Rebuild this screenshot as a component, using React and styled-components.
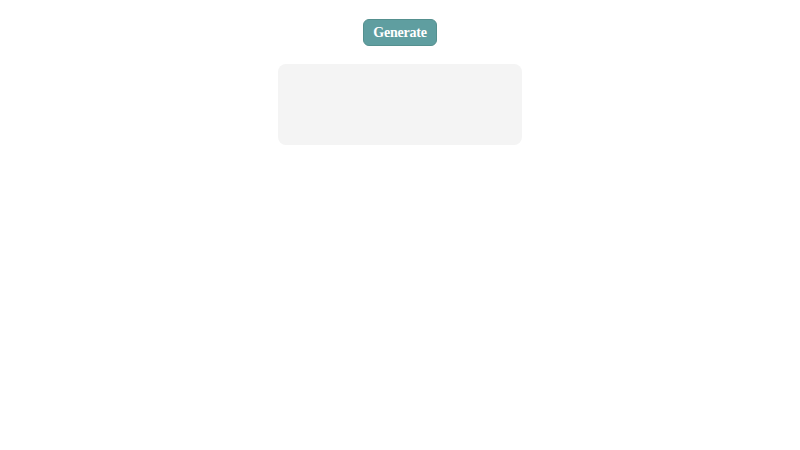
import React from "react";
import styled, { createGlobalStyle } from "styled-components";

const Global = createGlobalStyle`
  body {
    margin: 0;
    background: #fff;
    font-family: "Liberation Serif", serif;
  }
`;

const Wrap = styled.div`
  display: flex;
  flex-direction: column;
  align-items: center;
  padding-top: 19px;
`;

const Btn = styled.button`
  height: 27px;
  padding: 0 9px;
  border: 1px solid #55908f;
  border-radius: 6px;
  background-color: #5f9ea0;
  color: white;
  font-family: "Liberation Serif", serif;
  font-weight: bold;
  font-size: 14px;
  letter-spacing: -0.2px;
  cursor: pointer;
`;

const Output = styled.div`
  width: 244px;
  height: 81px;
  margin-top: 18px;
  background: #f4f4f4;
  border-radius: 8px;
`;

const App = () => {
  return (
    <Wrap>
      <Global />
      <Btn>Generate</Btn>
      <Output />
    </Wrap>
  );
};

export default App;
